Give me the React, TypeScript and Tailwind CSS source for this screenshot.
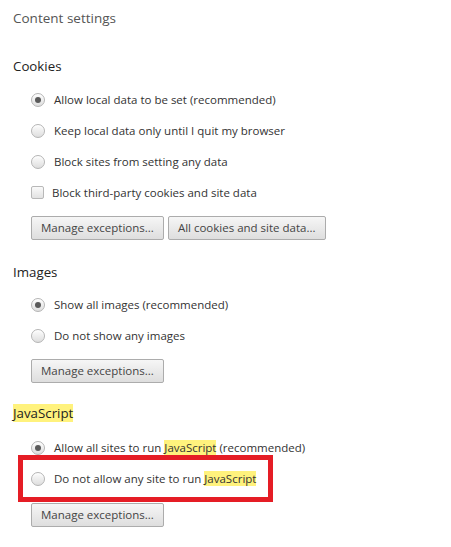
import React from "react";

const font = { fontFamily: '"Open Sans", "Noto Sans", Arial, sans-serif' };

function Radio({ checked }: { checked?: boolean }) {
  return (
    <span className="flex h-[14px] w-[14px] shrink-0 items-center justify-center rounded-full border border-[#b4b4b4] bg-gradient-to-b from-[#fdfdfd] to-[#dedede] shadow-[inset_0_1px_1px_rgba(255,255,255,0.9)]">
      {checked && <span className="h-[6px] w-[6px] rounded-full bg-[#5a5a5a]" />}
    </span>
  );
}

function Check() {
  return (
    <span className="h-[13px] w-[13px] shrink-0 rounded-[2px] border border-[#b8b8b8] bg-gradient-to-b from-[#fafafa] to-[#e2e2e2]" />
  );
}

function Hl({ children }: { children: React.ReactNode }) {
  return <span className="bg-[#fff27d]">{children}</span>;
}

function Option({ checked, children }: { checked?: boolean; children: React.ReactNode }) {
  return (
    <div className="flex h-[31px] items-center gap-[9px]">
      <Radio checked={checked} />
      <span>{children}</span>
    </div>
  );
}

function Btn({ children }: { children: React.ReactNode }) {
  return (
    <button className="h-[24px] rounded-[2px] border border-[#acacac] bg-gradient-to-b from-[#f6f6f6] to-[#dedede] px-[9px] text-[11.5px] leading-[22px] text-[#444]">
      {children}
    </button>
  );
}

function Heading({ children, className }: { children: React.ReactNode; className?: string }) {
  return <div className={"h-[20px] text-[13.3px] leading-[20px] text-[#222] " + (className ?? "")}>{children}</div>;
}

export default function App() {
  return (
    <div className="h-[547px] w-[451px] bg-white pl-[13px] text-[11.5px] text-[#333]" style={font}>
      <div className="pt-[8px] h-[28px] text-[13.5px] leading-[20px] text-[#555]">Content settings</div>

      <Heading className="mt-[28px]">Cookies</Heading>
      <div className="mt-[8px] pl-[18px]">
        <Option checked>Allow local data to be set (recommended)</Option>
        <Option>Keep local data only until I quit my browser</Option>
        <Option>Block sites from setting any data</Option>
        <div className="flex h-[31px] items-center gap-[8px]">
          <Check />
          <span>Block third-party cookies and site data</span>
        </div>
        <div className="mt-[8px] flex gap-[4px]">
          <Btn>Manage exceptions...</Btn>
          <Btn>All cookies and site data...</Btn>
        </div>
      </div>

      <Heading className="mt-[22px]">Images</Heading>
      <div className="mt-[7px] pl-[18px]">
        <Option checked>Show all images (recommended)</Option>
        <Option>Do not show any images</Option>
        <div className="mt-[8px] flex">
          <Btn>Manage exceptions...</Btn>
        </div>
      </div>

      <Heading className="mt-[20px]">
        <Hl>JavaScript</Hl>
      </Heading>
      <div className="mt-[9px] pl-[18px]">
        <Option checked>
          Allow all sites to run <Hl>JavaScript</Hl> (recommended)
        </Option>
        <div className="-my-[8px] -ml-[13px] w-[255px] border-[5px] border-[#e51d25] py-[3px] pl-[8px]">
          <Option>
            Do not allow any site to run <Hl>JavaScript</Hl>
          </Option>
        </div>
        <div className="mt-[9px] flex">
          <Btn>Manage exceptions...</Btn>
        </div>
      </div>
    </div>
  );
}
